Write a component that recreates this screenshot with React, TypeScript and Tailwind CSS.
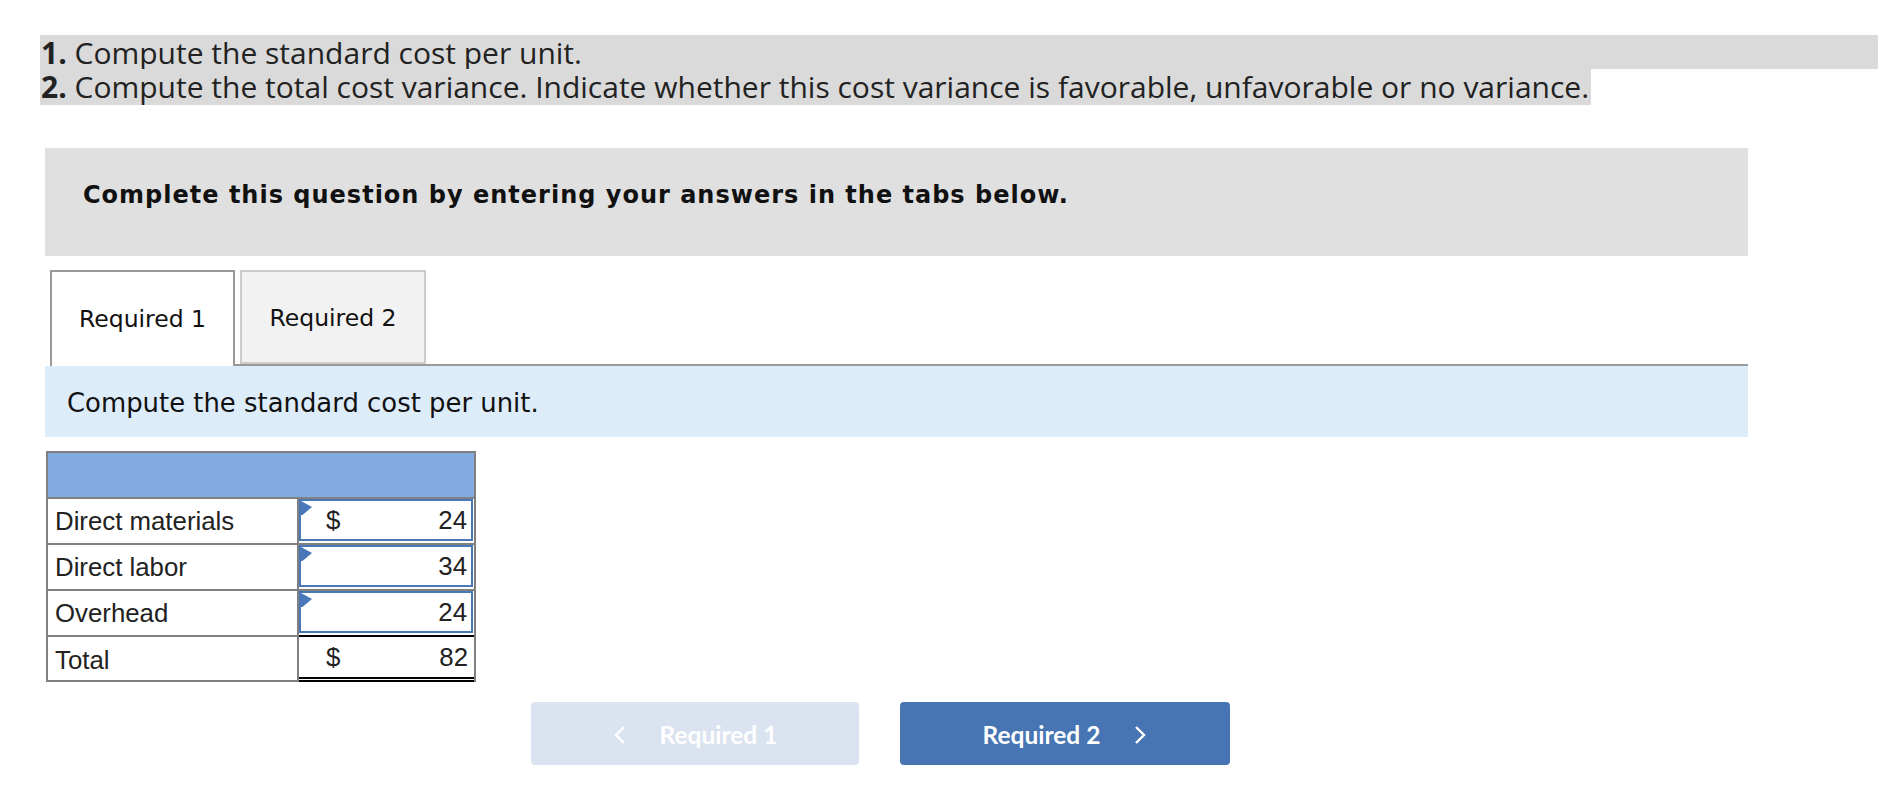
import React from "react";

const Flag = () => (
  <svg
    className="absolute left-0 top-0"
    width="12"
    height="14"
    viewBox="0 0 12 14"
    aria-hidden="true"
  >
    <polygon points="0,0 11,6 1.5,14 0,14" fill="#4a77b8" />
  </svg>
);

const ChevronLeft = () => (
  <svg width="14" height="20" viewBox="0 0 14 20" aria-hidden="true">
    <polyline points="11,2 3,10 11,18" fill="none" stroke="#ffffff" strokeWidth="2.4" />
  </svg>
);

const ChevronRight = () => (
  <svg width="14" height="20" viewBox="0 0 14 20" aria-hidden="true">
    <polyline points="3,2 11,10 3,18" fill="none" stroke="#ffffff" strokeWidth="2.4" />
  </svg>
);

type Row = { label: string; value: string; dollar: boolean };

const rows: Row[] = [
  { label: "Direct materials", value: "24", dollar: true },
  { label: "Direct labor", value: "34", dollar: false },
  { label: "Overhead", value: "24", dollar: false },
];

export default function App() {
  return (
    <div className="min-h-[804px] w-[1878px] bg-white pt-[35px] text-[#1f1f1f]">
      {/* question text */}
      <div className="ml-[40px] font-['Open_Sans',sans-serif] text-[30px] leading-[35px] text-[#222]">
        <div className="h-[34px] bg-[#dadada] pl-px">
          <span className="font-bold">1.</span> Compute the standard cost per unit.
        </div>
        <div>
          <span className="inline-block h-[36px] bg-[#dadada] pl-px pr-[2px]">
            <span className="font-bold">2.</span> Compute the total cost variance. Indicate whether this cost variance is favorable, unfavorable or no variance.
          </span>
        </div>
      </div>

      {/* instruction box */}
      <div className="ml-[45px] mt-[43px] flex h-[108px] w-[1703px] items-center bg-[#e0e0e0] pb-[15px] pl-[38px]">
        <span className="font-['DejaVu_Sans',sans-serif] text-[24px] font-bold tracking-[1px] text-[#111]">
          Complete this question by entering your answers in the tabs below.
        </span>
      </div>

      {/* tabs */}
      <div className="ml-[45px] mt-[14px] flex h-[96px] w-[1703px] font-['DejaVu_Sans',sans-serif] text-[23.5px] text-[#111]">
        <div className="w-[5px]" />
        <div className="flex h-[96px] w-[185px] items-center justify-center border-2 border-b-0 border-[#999999] bg-white pt-[2px]">
          Required 1
        </div>
        <div className="flex h-[96px] flex-1 items-start border-b-2 border-[#999999]">
          <div className="ml-[5px] flex h-[94px] w-[186px] items-center justify-center border-2 border-[#cccccc] bg-[#f2f2f2] pt-[4px]">
            Required 2
          </div>
        </div>
      </div>

      {/* prompt band */}
      <div className="ml-[45px] flex h-[71px] w-[1703px] items-center bg-[#ddecf9] pl-[22px] pt-[3px] font-['DejaVu_Sans',sans-serif] text-[25.9px] text-[#111]">
        Compute the standard cost per unit.
      </div>

      {/* table */}
      <div className="ml-[46px] mt-[14px] w-[430px] border-x-2 border-t-2 border-[#808080] font-['Liberation_Sans',Arial,sans-serif] text-[25.8px] text-[#222]">
        <div className="h-[44px] bg-[#82abe0]" />
        {rows.map((r) => (
          <div key={r.label} className="flex h-[46px] border-t-2 border-[#808080]">
            <div className="flex w-[251px] items-center border-r-2 border-[#808080] pl-[7px]">
              {r.label}
            </div>
            <div className="flex flex-1 pb-[2px] pr-px">
              <div className="relative flex h-[42px] flex-1 items-center justify-between border-2 border-[#4a77b8] bg-white pl-[25px] pr-[4px]">
                <Flag />
                <span>{r.dollar ? "$" : ""}</span>
                <span>{r.value}</span>
              </div>
            </div>
          </div>
        ))}
        <div className="flex h-[47px] border-t-2 border-[#808080]">
          <div className="flex w-[251px] items-center border-b-2 border-r-2 border-[#808080] pl-[7px] pt-[3px]">
            Total
          </div>
          <div className="-mt-[2px] flex flex-1 items-center justify-between border-b-[5px] border-t-2 border-double border-b-black border-t-black pl-[27px] pr-[6px] [border-top-style:solid]">
            <span>$</span>
            <span>82</span>
          </div>
        </div>
      </div>

      {/* nav buttons */}
      <div className="ml-[531px] mt-[20px] flex gap-[41px] font-['Lato',sans-serif] text-[24.5px] font-bold text-white">
        <div className="flex h-[63px] w-[328px] items-center justify-center gap-[33px] rounded-[4px] bg-[#dae3ef] pt-[3px]">
          <ChevronLeft />
          <span>Required 1</span>
        </div>
        <div className="flex h-[63px] w-[330px] items-center justify-center gap-[33px] rounded-[4px] bg-[#4775b4] pt-[3px]">
          <span>Required 2</span>
          <ChevronRight />
        </div>
      </div>
    </div>
  );
}
